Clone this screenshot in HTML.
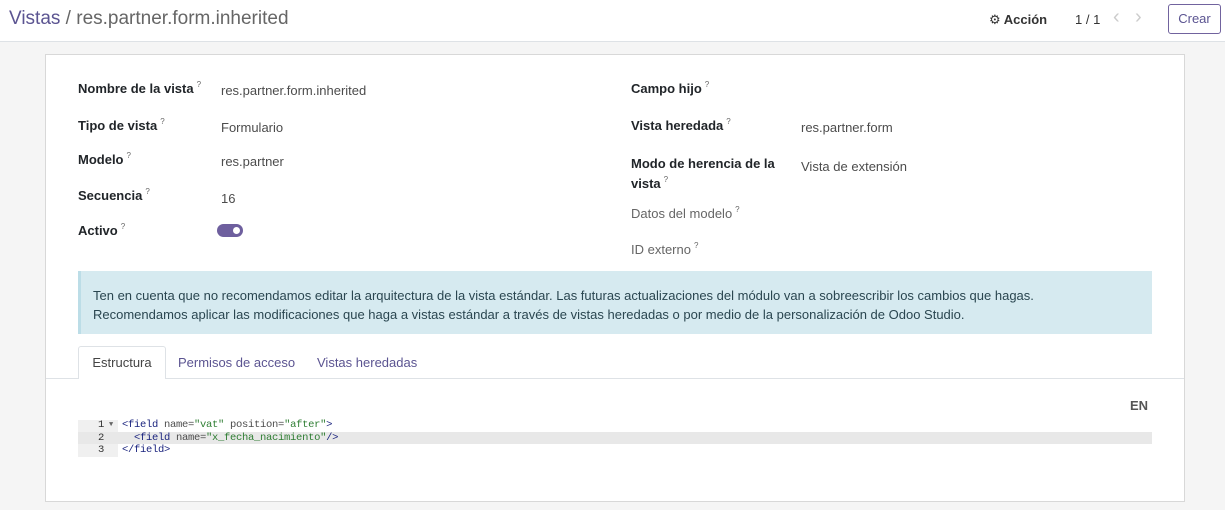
<!DOCTYPE html>
<html><head><meta charset="utf-8"><style>
*{box-sizing:border-box;margin:0;padding:0}
body{width:1225px;height:510px;background:#f5f5f5;font-family:"Liberation Sans","DejaVu Sans",sans-serif;font-size:13px;color:#4c4c4c;position:relative;overflow:hidden}
.hdr{position:absolute;left:0;top:0;width:1225px;height:42px;background:#fff;border-bottom:1px solid #dee2e6}
.a{position:absolute;white-space:nowrap}
.sheet{position:absolute;left:45px;top:54px;width:1140px;height:448px;background:#fff;border:1px solid #d8d8d8}
.l{font-weight:bold;color:#212529}
sup{font-size:8px;color:#666;margin-left:3px;font-weight:normal;vertical-align:6px;line-height:0}
.code{font-family:"Liberation Mono","DejaVu Sans Mono",monospace;font-size:10.5px;line-height:12.5px;letter-spacing:-0.3px}
.s{color:#2e7d32}.t{color:#1a237e}
.ln{position:absolute;right:0;width:40px;text-align:right}
</style></head><body>
<div class="hdr">
<div class="a" style="left:9px;top:8px;font-size:19px;color:#666"><span style="color:#5b5491">Vistas</span> / res.partner.form.inherited</div>
<div class="a" style="left:989px;top:12px;font-weight:bold;color:#333">⚙ Acción</div>
<div class="a" style="left:1075px;top:12px;color:#333">1 / 1</div>
<div class="a" style="left:1113px;top:6px;color:#ccc;font-size:20px">‹</div>
<div class="a" style="left:1135px;top:6px;color:#ccc;font-size:20px">›</div>
<div class="a" style="left:1168px;top:4px;width:53px;height:30px;border:1px solid #71639e;border-radius:3px;color:#5b5491;text-align:center;line-height:28px">Crear</div>
</div>
<div class="sheet"></div>
<div class="a l" style="left:78px;top:81px">Nombre de la vista<sup>?</sup></div>
<div class="a" style="left:221px;top:83px">res.partner.form.inherited</div>
<div class="a l" style="left:78px;top:118px">Tipo de vista<sup>?</sup></div>
<div class="a" style="left:221px;top:120px">Formulario</div>
<div class="a l" style="left:78px;top:152px">Modelo<sup>?</sup></div>
<div class="a" style="left:221px;top:154px">res.partner</div>
<div class="a l" style="left:78px;top:188px">Secuencia<sup>?</sup></div>
<div class="a" style="left:221px;top:191px">16</div>
<div class="a l" style="left:78px;top:223px">Activo<sup>?</sup></div>
<div class="a" style="left:217px;top:224px;width:26px;height:13px;border-radius:7px;background:#6e5f9e"><div style="position:absolute;right:3px;top:3px;width:7px;height:7px;border-radius:50%;background:#fff"></div></div>
<div class="a l" style="left:631px;top:81px">Campo hijo<sup>?</sup></div>
<div class="a l" style="left:631px;top:118px">Vista heredada<sup>?</sup></div>
<div class="a" style="left:801px;top:120px">res.partner.form</div>
<div class="a l" style="left:631px;top:154px;line-height:20px">Modo de herencia de la<br>vista<sup>?</sup></div>
<div class="a" style="left:801px;top:159px">Vista de extensión</div>
<div class="a" style="left:631px;top:206px;color:#666">Datos del modelo<sup>?</sup></div>
<div class="a" style="left:631px;top:242px;color:#666">ID externo<sup>?</sup></div>
<div class="a" style="left:78px;top:271px;width:1074px;height:63px;background:#d6eaf0;border-left:3px solid #bcdde7;padding:15px 12px;line-height:19px;color:#2a4650">Ten en cuenta que no recomendamos editar la arquitectura de la vista estándar. Las futuras actualizaciones del módulo van a sobreescribir los cambios que hagas.<br>Recomendamos aplicar las modificaciones que haga a vistas estándar a través de vistas heredadas o por medio de la personalización de Odoo Studio.</div>
<div class="a" style="left:46px;top:378px;width:1138px;height:1px;background:#dee2e6"></div>
<div class="a" style="left:78px;top:346px;width:88px;height:33px;background:#fff;border:1px solid #dee2e6;border-bottom:none;border-radius:3px 3px 0 0;text-align:center;line-height:32px;color:#444">Estructura</div>
<div class="a" style="left:178px;top:355px;color:#5b5491">Permisos de acceso</div>
<div class="a" style="left:317px;top:355px;color:#5b5491">Vistas heredadas</div>
<div class="a" style="left:1130px;top:398px;font-weight:bold;color:#555">EN</div>
<div class="a" style="left:78px;top:420px;width:40px;height:37px;background:#f0f0f0"></div>
<div class="a" style="left:78px;top:432px;width:1074px;height:12px;background:#e8e8e8"></div>
<div class="a code" style="left:78px;top:419px;width:40px;height:38px;color:#333">
<div class="ln" style="top:0;padding-right:14px">1</div>
<div class="a" style="left:31px;top:0;font-size:7px;color:#666">▼</div>
<div class="ln" style="top:12.5px;padding-right:14px">2</div>
<div class="ln" style="top:25px;padding-right:14px">3</div>
</div>
<div class="a code" style="left:122px;top:419px"><span class="t">&lt;field</span> name=<span class="s">"vat"</span> position=<span class="s">"after"</span><span class="t">&gt;</span><br>&nbsp;&nbsp;<span class="t">&lt;field</span> name=<span class="s">"x_fecha_nacimiento"</span><span class="t">/&gt;</span><br><span class="t">&lt;/field&gt;</span></div>
</body></html>
